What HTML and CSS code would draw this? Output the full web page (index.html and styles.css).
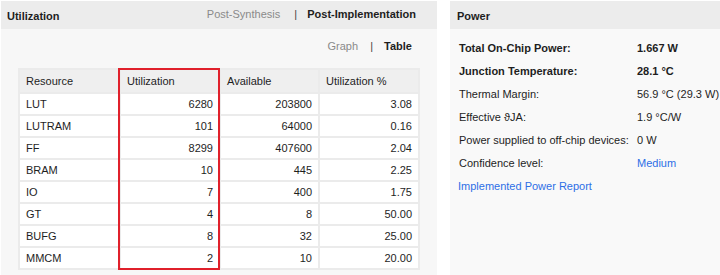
FILE: index.html
```html
<!DOCTYPE html>
<html>
  <head>
    <meta charset="utf-8">
    <title>Project Summary</title>
    <link rel="stylesheet" href="styles.css">
  </head>
<body>
    <div class="page">
        <!-- Utilization -->
        <section class="panel util">
            <div class="panel-head">
                <span class="title">Utilization</span>
                <div class="tabs">
                    <span class="tab">Post-Synthesis</span>
                    <span class="sep">|</span>
                    <span class="tab active">Post-Implementation</span>
                </div>
            </div>
            <div class="panel-body">
                <div class="views">
                    <span class="tab">Graph</span>
                    <span class="sep">|</span>
                    <span class="tab active">Table</span>
                </div>
                <div class="table-wrap">
                    <table class="util-table">
                        <colgroup>
                            <col class="c1"><col class="c2"><col class="c3"><col class="c4">
                        </colgroup>
                        <thead>
                            <tr><th>Resource</th><th>Utilization</th><th>Available</th><th>Utilization %</th></tr>
                        </thead>
                        <tbody>
                            <tr><td>LUT</td><td>6280</td><td>203800</td><td>3.08</td></tr>
                            <tr><td>LUTRAM</td><td>101</td><td>64000</td><td>0.16</td></tr>
                            <tr><td>FF</td><td>8299</td><td>407600</td><td>2.04</td></tr>
                            <tr><td>BRAM</td><td>10</td><td>445</td><td>2.25</td></tr>
                            <tr><td>IO</td><td>7</td><td>400</td><td>1.75</td></tr>
                            <tr><td>GT</td><td>4</td><td>8</td><td>50.00</td></tr>
                            <tr><td>BUFG</td><td>8</td><td>32</td><td>25.00</td></tr>
                            <tr><td>MMCM</td><td>2</td><td>10</td><td>20.00</td></tr>
                        </tbody>
                    </table>
                    <!-- highlighted column -->
                    <div class="highlight"></div>
                </div>
            </div>
        </section>
        <!-- Power -->
        <section class="panel power">
            <div class="panel-head">
                <span class="title">Power</span>
            </div>
            <div class="power-body">
                <div class="label strong">Total On-Chip Power:</div><div class="value strong">1.667 W</div>
                <div class="label strong">Junction Temperature:</div><div class="value strong">28.1 °C</div>
                <div class="label">Thermal Margin:</div><div class="value">56.9 °C (29.3 W)</div>
                <div class="label">Effective ϑJA:</div><div class="value">1.9 °C/W</div>
                <div class="label">Power supplied to off-chip devices:</div><div class="value">0 W</div>
                <div class="label">Confidence level:</div><div class="value"><a class="link" href="javascript:void(0);">Medium</a></div>
                <div class="report"><a class="link" href="javascript:void(0);">Implemented Power Report</a></div>
            </div>
        </section>
    </div>
</body>
</html>
```

FILE: styles.css
```css
* {
    box-sizing: border-box;
}
body {
    margin: 0;
    background: #fff;
    font-family: "Liberation Sans", Arial, sans-serif;
    font-size: 11px;
    color: #1e1e1e;
}
.page {
    display: flex;
    gap: 13px;
    height: 275px;
    padding-top: 1px;
}
.panel {
    display: flex;
    flex-direction: column;
}
.util {
    width: 436px;
    margin-left: 1px;
    background: #f7f7f7;
}
.power {
    flex: 1;
    background: #f9f9f9;
}
.panel-head {
    height: 28px;
    background: #ececec;
    display: flex;
    align-items: center;
    justify-content: space-between;
    padding: 0 21px 0 6px;
}
.power .panel-head {
    padding-left: 7px;
}
.title {
    font-weight: bold;
    padding-top: 2px;
}
.tabs {
    margin-bottom: 3px;
}
.tab {
    color: #8a8a8a;
}
.tab.active {
    color: #1e1e1e;
    font-weight: bold;
}
.sep {
    color: #444;
    margin: 0 7px 0 11px;
}
.panel-body {
    padding: 10px 0 0 17px;
}
.views {
    line-height: 14px;
    text-align: right;
    padding-right: 25px;
}
.views .sep {
    margin: 0 8px 0 9px;
}
/* table */
.table-wrap {
    position: relative;
    width: 402px;
    margin-top: 15px;
}
.util-table {
    border-collapse: collapse;
    table-layout: fixed;
    width: 402px;
    border: 2px solid #e3e3e3;
    background: #fff;
}
.c1 { width: 101px; }
.c2 { width: 100px; }
.c3 { width: 99px; }
.c4 { width: 100px; }
.util-table th,
.util-table td {
    border: 2px solid #ebebeb;
    padding: 0 6px;
    white-space: nowrap;
}
.util-table th {
    height: 24px;
    background: #efefef;
    font-weight: normal;
    text-align: left;
}
.util-table td {
    height: 22px;
    text-align: right;
}
.util-table td:first-child {
    text-align: left;
}
.highlight {
    position: absolute;
    top: 0;
    bottom: 0;
    left: 100px;
    width: 102px;
    border: 2px solid #e0202b;
    pointer-events: none;
}
/* power */
.power-body {
    display: grid;
    grid-template-columns: 178px auto;
    grid-auto-rows: 23px;
    align-items: center;
    padding: 7px 0 0 9px;
    white-space: nowrap;
}
.strong {
    font-weight: bold;
}
.report {
    grid-column: 1 / 3;
    margin-left: -1px;
}
.link {
    color: #2d6fe6;
    text-decoration: none;
}
```
